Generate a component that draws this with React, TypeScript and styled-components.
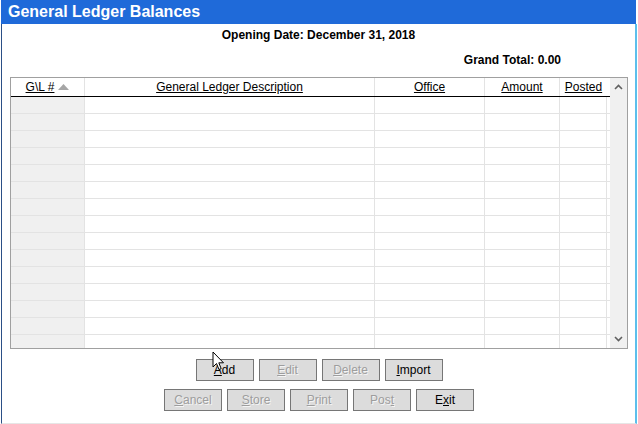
import React from "react";
import styled, { createGlobalStyle } from "styled-components";

const Global = createGlobalStyle`
  html, body { margin: 0; padding: 0; background: #fff; }
  body { font-family: "Liberation Sans", Arial, sans-serif; }
`;

const Window = styled.div`
  position: relative;
  width: 638px;
  height: 424px;
  display: flex;
  flex-direction: column;
  background: #fff;
  overflow: hidden;
  font-family: "Liberation Sans", Arial, sans-serif;
`;

const TitleBar = styled.div`
  height: 24px;
  margin: 0 2px 0 1px;
  padding-left: 7px;
  background: #1f6ad9;
  color: #fff;
  font-weight: bold;
  font-size: 16px;
  line-height: 24px;
`;

const Content = styled.div`
  flex: 1;
  display: flex;
  flex-direction: column;
  margin-left: 1px;
  margin-right: 1px;
  border-left: 1px solid #2b4f86;
  border-right: 2px solid #5cbfec;
  border-bottom: 1px solid #e6e6e6;
`;

const OpeningDate = styled.div`
  margin-top: 4px;
  height: 15px;
  text-align: center;
  font-weight: bold;
  font-size: 12px;
  line-height: 15px;
  color: #000;
`;

const GrandTotal = styled.div`
  margin-top: 10px;
  height: 15px;
  padding-right: 74px;
  text-align: right;
  font-weight: bold;
  font-size: 12px;
  line-height: 15px;
  color: #000;
`;

const TableBox = styled.div`
  margin: 9px 7px 0 8px;
  height: 270px;
  border: 1px solid #a0a0a0;
  display: flex;
  background: #fff;
`;

const Grid = styled.div`
  flex: 1;
  display: flex;
  flex-direction: column;
  overflow: hidden;
`;

const cols = "74px 290px 110px 75px 47px 1fr";

const HeaderRow = styled.div`
  display: grid;
  grid-template-columns: ${cols};
  height: 18px;
  border-bottom: 1px solid #000;
  flex-shrink: 0;
`;

const HeaderCell = styled.div<{ $last?: boolean }>`
  display: flex;
  align-items: center;
  justify-content: center;
  gap: 4px;
  border-right: ${(p) => (p.$last ? "none" : "1px solid #e3e3e3")};
  font-size: 12px;
  color: #000;
  & > span {
    text-decoration: underline;
    text-underline-offset: 1px;
  }
`;

const BodyRow = styled.div`
  display: grid;
  grid-template-columns: ${cols};
  height: 16px;
  border-bottom: 1px solid #e3e3e3;
  flex-shrink: 0;
`;

const Cell = styled.div<{ $key?: boolean; $last?: boolean }>`
  background: ${(p) => (p.$key ? "#f0f0f0" : "#fff")};
  border-right: ${(p) => (p.$last ? "none" : "1px solid #e3e3e3")};
`;

const ScrollBar = styled.div`
  width: 17px;
  background: #f0f0f0;
  display: flex;
  flex-direction: column;
  justify-content: space-between;
  align-items: center;
  padding: 6px 0 6px;
`;

const ButtonArea = styled.div`
  display: flex;
  flex-direction: column;
  align-items: center;
  gap: 8px;
  margin-top: 10px;
  padding-left: 1px;
`;

const ButtonRow = styled.div`
  display: flex;
  gap: 5px;
`;

const Button = styled.div<{ $disabled?: boolean }>`
  width: 56px;
  height: 20px;
  border: 1px solid #767676;
  background: #dcdcdc;
  display: flex;
  align-items: center;
  justify-content: center;
  font-size: 12px;
  color: ${(p) => (p.$disabled ? "#9d9d9d" : "#000")};
  text-shadow: ${(p) => (p.$disabled ? "1px 1px 0 #f4f4f4" : "none")};
  & u {
    text-underline-offset: 1px;
  }
`;

const Cursor = styled.svg`
  position: absolute;
  left: 212px;
  top: 351px;
`;

const Chevron = ({ up }: { up?: boolean }) => (
  <svg width="9" height="6" viewBox="0 0 9 6">
    <path
      d={up ? "M1 5 L4.5 1.5 L8 5" : "M1 1 L4.5 4.5 L8 1"}
      fill="none"
      stroke="#606060"
      strokeWidth="1.6"
    />
  </svg>
);

const SortArrow = () => (
  <svg width="11" height="6" viewBox="0 0 11 6">
    <path d="M0 6 L5.5 0 L11 6 Z" fill="#a6a6a6" />
  </svg>
);

const rows = Array.from({ length: 15 });

const btn = (label: string, idx: number, disabled: boolean) => (
  <Button $disabled={disabled}>
    {label.slice(0, idx)}
    <u>{label[idx]}</u>
    {label.slice(idx + 1)}
  </Button>
);

export default function App() {
  return (
    <Window>
      <Global />
      <TitleBar>General Ledger Balances</TitleBar>
      <Content>
        <OpeningDate>Opening Date: December 31, 2018</OpeningDate>
        <GrandTotal>Grand Total: 0.00</GrandTotal>
        <TableBox>
          <Grid>
            <HeaderRow>
              <HeaderCell>
                <span>G\L #</span>
                <SortArrow />
              </HeaderCell>
              <HeaderCell>
                <span>General Ledger Description</span>
              </HeaderCell>
              <HeaderCell>
                <span>Office</span>
              </HeaderCell>
              <HeaderCell>
                <span>Amount</span>
              </HeaderCell>
              <HeaderCell $last>
                <span>Posted</span>
              </HeaderCell>
              <HeaderCell $last />
            </HeaderRow>
            {rows.map((_, i) => (
              <BodyRow key={i}>
                <Cell $key />
                <Cell />
                <Cell />
                <Cell />
                <Cell />
                <Cell $last />
              </BodyRow>
            ))}
          </Grid>
          <ScrollBar>
            <Chevron up />
            <Chevron />
          </ScrollBar>
        </TableBox>
        <ButtonArea>
          <ButtonRow>
            {btn("Add", 0, false)}
            {btn("Edit", 0, true)}
            {btn("Delete", 0, true)}
            {btn("Import", 0, false)}
          </ButtonRow>
          <ButtonRow>
            {btn("Cancel", 0, true)}
            {btn("Store", 0, true)}
            {btn("Print", 0, true)}
            {btn("Post", 3, true)}
            {btn("Exit", 1, false)}
          </ButtonRow>
        </ButtonArea>
      </Content>
      <Cursor width="13" height="20" viewBox="0 0 13 20">
        <path
          d="M1 1 L1 16 L4.5 12.5 L7 18.5 L9.2 17.6 L6.8 11.8 L11.5 11.8 Z"
          fill="#fff"
          stroke="#000"
          strokeWidth="1"
          strokeLinejoin="miter"
        />
      </Cursor>
    </Window>
  );
}
